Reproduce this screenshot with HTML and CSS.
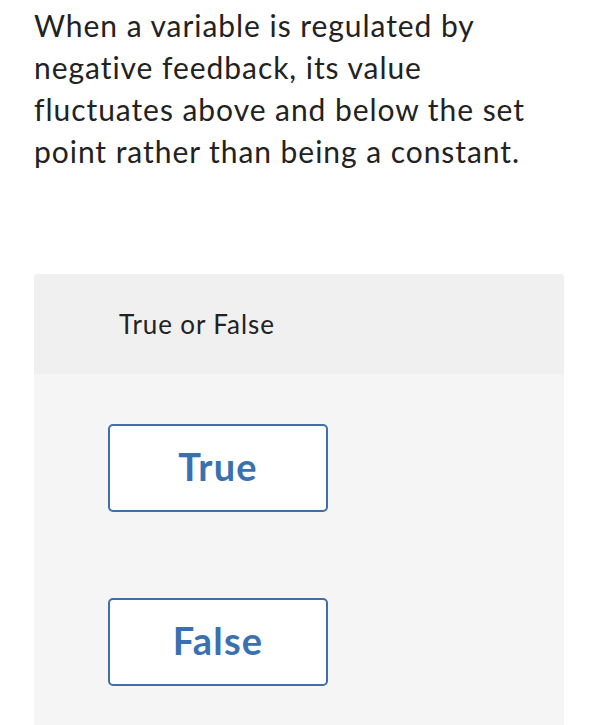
FILE: index.html
```html
<!DOCTYPE html>
<html lang="en">
<head>
<meta charset="utf-8">
<title>True or False</title>
<link rel="stylesheet" href="styles.css">
</head>
<body>
  <main class="question">
    <p class="prompt">When a variable is regulated by negative feedback, its value fluctuates above and below the set point rather than being a constant.</p>
    <section class="answer-panel">
      <header class="panel-head">True or False</header>
      <div class="choices">
        <button class="choice" type="button">True</button>
        <button class="choice" type="button">False</button>
      </div>
    </section>
  </main>
</body>
</html>
```
FILE: styles.css
```css
html, body {
  margin: 0;
  padding: 0;
  background: #ffffff;
}

body {
  font-family: "Lato", "Open Sans", sans-serif;
  color: #222222;
}

.question {
  padding: 4px 30px 0 34px;
}

.prompt {
  margin: 0;
  font-size: 30px;
  line-height: 42px;
  width: 505px;
  letter-spacing: 0.95px;
}

.answer-panel {
  margin-top: 102px;
  width: 530px;
  border-radius: 4px 4px 0 0;
  background: #f5f5f5;
  overflow: hidden;
  min-height: 460px;
}

.panel-head {
  height: 100px;
  background: #f0f0f0;
  display: flex;
  align-items: center;
  padding-left: 85px;
  font-size: 26px;
  letter-spacing: 0.9px;
}

.choices {
  display: flex;
  flex-direction: column;
  gap: 86px;
  padding: 50px 0 0 74px;
}

.choice {
  width: 220px;
  height: 88px;
  padding: 0 0 5px;
  background: #ffffff;
  border: 2px solid #3f6fa9;
  border-radius: 5px;
  font-family: "Lato", "Open Sans", sans-serif;
  font-weight: 700;
  font-size: 38px;
  letter-spacing: 1.2px;
  color: #3a70b0;
  cursor: pointer;
}
```
